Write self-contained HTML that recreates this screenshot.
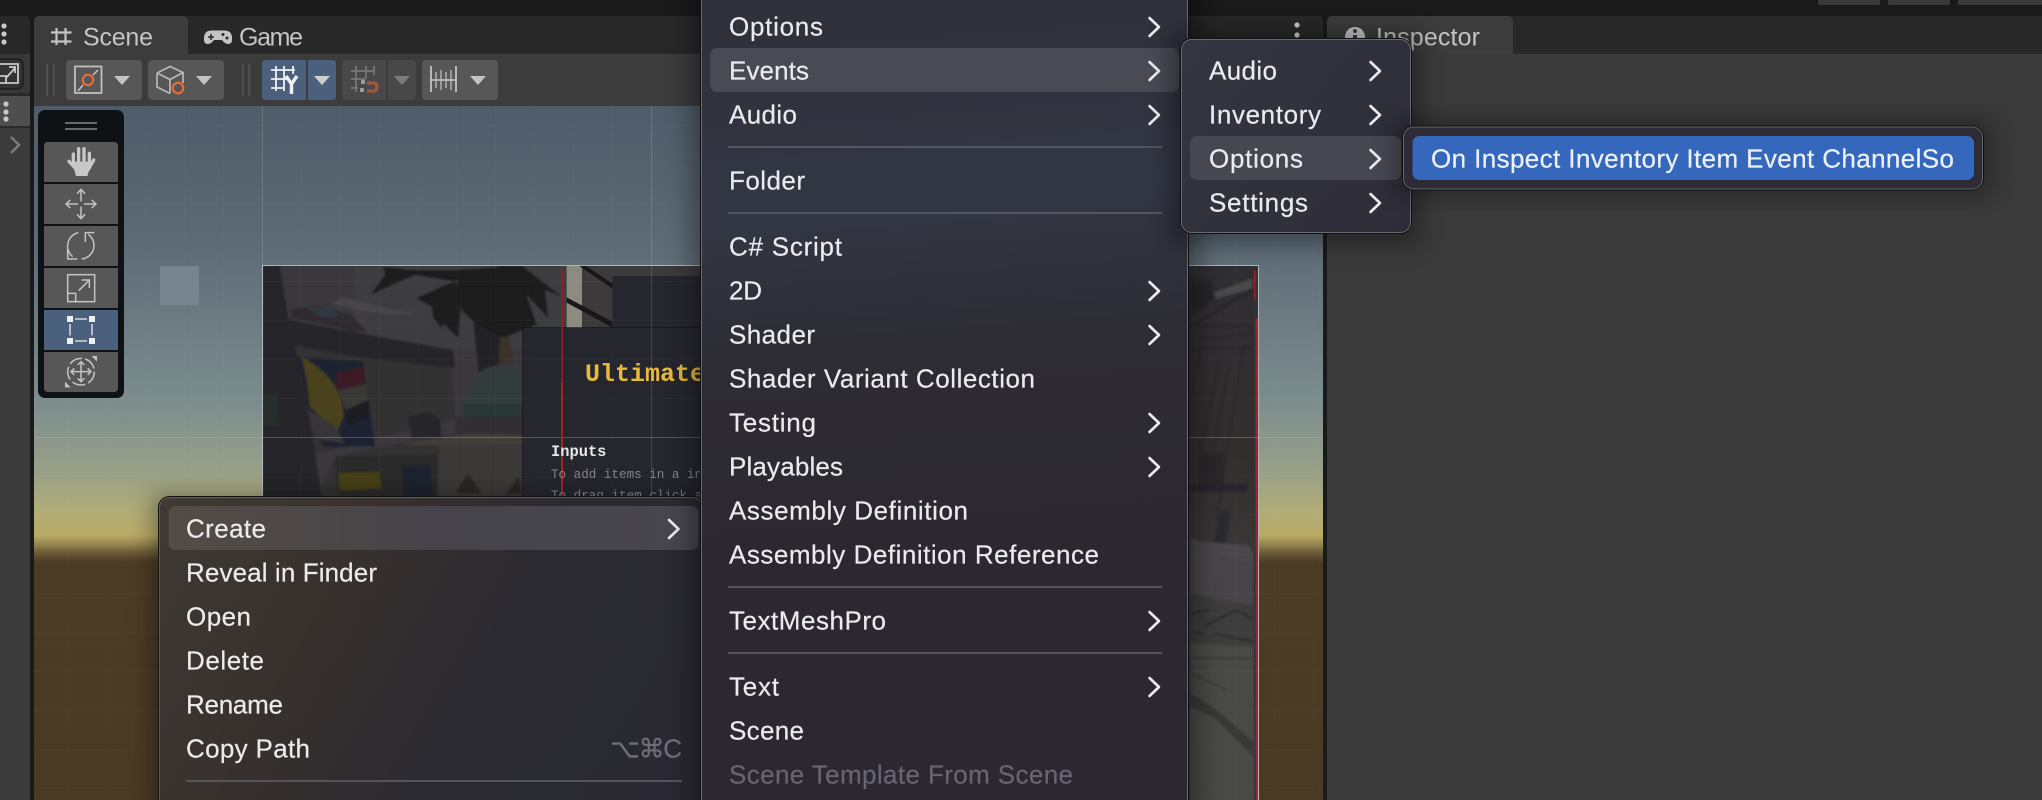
<!DOCTYPE html>
<html><head><meta charset="utf-8"><title>Unity Editor</title>
<style>
html,body{margin:0;padding:0;background:#3a3a3a;width:2042px;height:800px;overflow:hidden}
svg{display:block}
.m{font-family:"Liberation Sans","DejaVu Sans",sans-serif;font-size:26px;fill:#ebebed;stroke:#ebebed;stroke-width:.2px;transform:translateY(-.5px)}
.t{font-family:"Liberation Sans",sans-serif;font-size:25px;fill:#c4c4c4}
.c{fill:none;stroke:#ececee;stroke-width:2.6;stroke-linecap:round;stroke-linejoin:round}
.i{fill:none;stroke:#c4c4c4;stroke-width:4.5}
.mono{font-family:"Liberation Mono",monospace}
</style></head><body>
<svg width="2042" height="800" viewBox="0 0 2042 800" xmlns="http://www.w3.org/2000/svg">
<defs>
<linearGradient id="sky" gradientUnits="userSpaceOnUse" x1="0" y1="106" x2="0" y2="800">
<stop offset="0" stop-color="#4f5c69"/><stop offset=".193" stop-color="#5c6a75"/><stop offset=".424" stop-color="#7b8c8e"/><stop offset=".525" stop-color="#98a088"/><stop offset=".589" stop-color="#b3ad75"/><stop offset=".618" stop-color="#bcab66"/><stop offset=".632" stop-color="#948550"/><stop offset=".644" stop-color="#6a5a35"/><stop offset=".657" stop-color="#4c3c25"/><stop offset="1" stop-color="#4a3a24"/>
</linearGradient>
<pattern id="grid" patternUnits="userSpaceOnUse" x="262" y="125" width="38.92" height="39">
<path d="M0 0V39M0 0H39" stroke="#fff" stroke-opacity=".04" fill="none" stroke-width="1"/>
</pattern>
<linearGradient id="m1" gradientUnits="userSpaceOnUse" x1="158" y1="496" x2="700" y2="800">
<stop offset="0" stop-color="#3f3a34"/><stop offset=".3" stop-color="#38312d"/><stop offset=".6" stop-color="#2b2a31"/><stop offset="1" stop-color="#2a2933"/>
</linearGradient>
<linearGradient id="m2" gradientUnits="userSpaceOnUse" x1="900" y1="0" x2="960" y2="800">
<stop offset="0" stop-color="#2f303a"/><stop offset=".25" stop-color="#333744"/><stop offset=".45" stop-color="#2d2b33"/><stop offset=".7" stop-color="#2c2832"/><stop offset="1" stop-color="#2b2832"/>
</linearGradient>
<linearGradient id="m3" gradientUnits="userSpaceOnUse" x1="1180" y1="38" x2="1411" y2="234">
<stop offset="0" stop-color="#333640"/><stop offset="1" stop-color="#2e2c38"/>
</linearGradient>
<linearGradient id="h1" gradientUnits="userSpaceOnUse" x1="168" y1="0" x2="698" y2="0">
<stop offset="0" stop-color="#534c45"/><stop offset=".5" stop-color="#46434a"/><stop offset="1" stop-color="#47454f"/>
</linearGradient>
<linearGradient id="rs" gradientUnits="userSpaceOnUse" x1="0" y1="266" x2="0" y2="800">
<stop offset="0" stop-color="#2f2e32"/><stop offset=".35" stop-color="#322e2e"/><stop offset=".6" stop-color="#3c3a3a"/><stop offset="1" stop-color="#4a4845"/>
</linearGradient>
<filter id="sh" x="-20%" y="-20%" width="140%" height="140%"><feGaussianBlur stdDeviation="12"/></filter>
<filter id="soft" x="-5%" y="-5%" width="110%" height="110%"><feGaussianBlur stdDeviation="3.5"/></filter>
<clipPath id="cv"><rect x="263" y="266" width="995" height="534"/></clipPath>
</defs>

<!-- base -->
<rect width="2042" height="800" fill="#1a1a1a"/>
<rect x="1818" y="0" width="62" height="5" rx="1" fill="#3a3a3a"/>
<rect x="1888" y="0" width="62" height="5" rx="1" fill="#3a3a3a"/>
<rect x="1958" y="0" width="84" height="5" rx="1" fill="#3a3a3a"/>

<!-- left panel -->
<path d="M0 16H24Q30 16 30 22V800H0Z" fill="#282828"/>
<rect x="0" y="54" width="30" height="746" fill="#3b3b3b"/>
<rect x="0" y="54" width="30" height="42" fill="#383838"/>
<rect x="0" y="93" width="30" height="3" fill="#292929"/>
<rect x="0" y="96" width="30" height="30" fill="#4e4e4e"/>
<rect x="0" y="126" width="30" height="2" fill="#2a2a2a"/>
<g fill="#c8c8c8"><circle cx="4" cy="26" r="2.6"/><circle cx="4" cy="34" r="2.6"/><circle cx="4" cy="42" r="2.6"/>
<circle cx="6" cy="104" r="2.6"/><circle cx="6" cy="112" r="2.6"/><circle cx="6" cy="119" r="2.6"/></g>
<rect x="-10" y="59" width="33" height="30" rx="6" fill="#333" stroke="#232323" stroke-width="2"/>
<g fill="none" stroke="#c8c8c8" stroke-width="1.8"><path d="M0 64H18V83H0"/><path d="M0 76H6V84"/><path d="M6 78L15 68M9 67H15V73"/></g>
<path d="M11 137L19 145L11 153" fill="none" stroke="#7a7a7a" stroke-width="2.6"/>

<!-- scene window chrome -->
<path d="M34 22Q34 16 40 16H1318Q1323 16 1323 22V54H34Z" fill="#282828"/>
<path d="M34 54V22Q34 16 40 16H182Q188 16 188 22V54Z" fill="#3c3c3c"/>
<rect x="34" y="54" width="1289" height="52" fill="#3c3c3c"/>
<rect x="46.5" y="64" width="1.6" height="32" fill="#555"/><rect x="53" y="64" width="1.6" height="32" fill="#555"/>
<rect x="242" y="64" width="1.6" height="32" fill="#555"/><rect x="248.5" y="64" width="1.6" height="32" fill="#555"/>

<!-- tabs -->
<path d="M56.5 28V45M65.5 28V45M51 32.5H71.5M51 41.5H71.5" fill="none" stroke="#c4c4c4" stroke-width="2.2"/>
<text class="t" x="83" y="45.5" textLength="70" lengthAdjust="spacing">Scene</text>
<path d="M211 30.5H225Q232 31 232 38V40Q232 44 228 44Q225 44 222 40H214Q211 44 208 44Q204 44 204 40V38Q204 31 211 30.5Z" fill="#c4c4c4"/>
<path d="M208 37H214M211 34V40" stroke="#282828" stroke-width="1.6"/><circle cx="223" cy="34.5" r="1.5" fill="#282828"/><circle cx="227" cy="38" r="1.5" fill="#282828"/>
<text class="t" x="239" y="45.5" textLength="64" lengthAdjust="spacing">Game</text>

<!-- toolbar buttons -->
<rect x="66" y="60" width="76" height="40" rx="4" fill="#575757"/>
<rect x="75" y="66.5" width="26.5" height="26.5" fill="none" stroke="#c4c4c4" stroke-width="1.7"/>
<path d="M78 91L83 85M93 75L98 70" stroke="#c4c4c4" stroke-width="1.5"/>
<circle cx="88" cy="80" r="5.2" fill="none" stroke="#f26a35" stroke-width="2"/>
<path d="M114 76H130L122 85Z" fill="#c4c4c4"/>
<rect x="148" y="60" width="76" height="40" rx="4" fill="#575757"/>
<path d="M157 73L170 66.5L183 72.5V83M157 73V87L170 93.5M157 73L170 79.5L183 72.5M170 79.5V93.5" fill="none" stroke="#b8b8b8" stroke-width="1.7"/>
<circle cx="178" cy="88" r="5.3" fill="#575757" stroke="#f26a35" stroke-width="2"/>
<path d="M196 76H212L204 85Z" fill="#c4c4c4"/>

<path d="M266 60H306V100H266Q262 100 262 96V64Q262 60 266 60Z" fill="#4a607d"/>
<path d="M308 60H332Q336 60 336 64V96Q336 100 332 100H308Z" fill="#4a607d"/>
<path d="M271 70H295M271 79H287M271 88H284M276 66V91M284 66V91M293 66V74" stroke="#f0f0f0" stroke-width="1.8" fill="none"/>
<path d="M286 76L291.5 84L297 76M291.5 84V94" stroke="#f0f0f0" stroke-width="3.4" fill="none"/>
<path d="M314 76H330L322 85Z" fill="#d0d0d0"/>

<path d="M346 60H386V100H346Q342 100 342 96V64Q342 60 346 60Z" fill="#484848"/>
<path d="M388 60H412Q416 60 416 64V96Q416 100 412 100H388Z" fill="#484848"/>
<path d="M351 71H375M351 79H366M351 88H358M356 66V92M366 66V78M374 66V75" stroke="#777" stroke-width="1.7" fill="none"/>
<rect x="360" y="88" width="4" height="4" fill="#9a9a9a"/><rect x="361" y="80" width="4" height="4" fill="#9a9a9a"/>
<path d="M367 83H373Q377 83 377 87Q377 91 373 91H367" fill="none" stroke="#a0563a" stroke-width="3.4"/>
<path d="M394 76H410L402 85Z" fill="#7c7c7c"/>

<rect x="422" y="60" width="76" height="40" rx="4" fill="#575757"/>
<path d="M431 66V92M456 66V92M431 80H456" stroke="#cfcfcf" stroke-width="1.6" fill="none"/>
<path d="M436 72V88M441 70V90M446 72V88M451 70V90" stroke="#bdbdbd" stroke-width="1.3" fill="none"/>
<path d="M470 76H486L478 85Z" fill="#c4c4c4"/>

<!-- viewport sky -->
<rect x="34" y="106" width="1289" height="694" fill="url(#sky)"/>
<rect x="34" y="106" width="1289" height="694" fill="url(#grid)"/>
<path d="M262.5 106V266M651.5 106V266" stroke="#fff" stroke-opacity=".12"/>
<path d="M34 437.5H262M1258 437.5H1323" stroke="#fff" stroke-opacity=".08"/>
<rect x="160" y="266" width="39" height="39" fill="#76858f"/>

<!-- canvas content -->
<g clip-path="url(#cv)">
<rect x="263" y="266" width="995" height="534" fill="#363539"/>
<g transform="translate(255,260) scale(.33333)">
<g filter="url(#soft)">
<rect x="0" y="0" width="940" height="730" fill="#3a393c"/>
<rect x="300" y="0" width="640" height="266" fill="#3e3d40"/>
<!-- palm -->
<polygon points="655,190 745,195 725,345 672,350" fill="#232327"/>
<g fill="#1b1b1f">
<polygon points="345,105 390,45 385,20 470,30 620,30 600,65 480,45"/>
<polygon points="482,115 560,80 600,65 620,100 610,235 565,190 560,205 535,175 530,140"/>
<polygon points="600,30 760,20 800,60 845,195 790,215 745,235 660,190 620,150"/>
<polygon points="760,30 870,90 880,175 820,110"/>
<polygon points="720,16 800,16 920,110 870,90"/>
</g>
<!-- cloth, ring -->
<polygon points="230,130 265,110 400,145 490,160 400,165 300,150" fill="#464447"/>
<polygon points="105,150 180,135 290,165 335,215 300,215 200,190 110,175" fill="#2f2a2e"/>
<polygon points="150,140 240,145 250,170 200,175" fill="#303840"/>
<!-- building -->
<polygon points="120,255 590,320 605,520 430,550 240,590 190,710 800,710 803,520 620,470 120,600" fill="#333032"/>
<polygon points="100,180 595,270 600,325 300,290 118,255" fill="#282629"/>
<polygon points="100,175 120,255 300,290 300,240" fill="#282629"/>
<polygon points="125,290 325,305 360,560 205,560 160,440" fill="#1d2330"/>
<path d="M140 290Q265 360 265 470L245 520L165 440L155 360Z" fill="#4a421c"/>
<polygon points="240,340 328,320 332,370 250,392" fill="#3a1f25"/>
<polygon points="250,392 334,372 340,420 272,450" fill="#3b3738"/>
<polygon points="272,450 340,420 345,470 280,500" fill="#1c1c20"/>
<polygon points="160,450 240,500 270,550 200,540 165,500" fill="#393639"/>
<!-- left pillar -->
<polygon points="22,16 75,16 100,175 120,260 165,480 200,710 0,710 0,16" fill="#25252a"/>
<polygon points="25,400 65,400 72,500 25,495" fill="#272f2c"/>
<!-- dome -->
<polygon points="735,230 760,230 778,310 730,315" fill="#3a3029"/>
<path d="M625 470Q625 340 715 318Q780 315 803 340V470Z" fill="#303d3a"/>
<path d="M625 430H803V470H625Z" fill="#2c3835"/>
<rect x="600" y="470" width="203" height="55" fill="#302d32"/>
<polygon points="460,470 520,455 555,480 560,530 470,535" fill="#282629"/>
<polygon points="430,555 640,520 803,525 803,555 560,556" fill="#433e38"/>
<!-- lower -->
<polygon points="240,590 550,585 550,710 250,710" fill="#2c292b"/>
<polygon points="550,556 803,556 803,710 550,710" fill="#3b3939"/>
<polygon points="440,618 525,615 535,710 445,710" fill="#1d212e"/>
<polygon points="250,640 372,635 378,685 255,692" fill="#474116"/>
<polygon points="600,700 640,640 680,700" fill="#2a2626"/>
<polygon points="750,705 790,650 803,700" fill="#292525"/>
</g>
<!-- beam region -->
<rect x="935" y="16" width="46" height="190" fill="#8d8a80"/>
<polygon points="981,16 1332,16 1332,203 981,203" fill="#3d3a3c"/>
<polygon points="970,16 990,16 1072,70 1072,85" fill="#17171a"/>
<polygon points="935,112 1072,185 1072,203 935,128" fill="#17171a"/>
<rect x="1072" y="48" width="3000" height="155" fill="#26262e"/>
<!-- panel -->
<rect x="803" y="203" width="3000" height="520" fill="#26262f" stroke="#111" stroke-width="2"/>
</g>

<!-- right strip -->
<rect x="1190" y="266" width="68" height="534" fill="url(#rs)"/>
<g transform="translate(1180,230) scale(.33333)" filter="url(#soft)">
<polygon points="33,150 95,150 105,205 33,262" fill="#282629"/>
<polygon points="100,188 218,145 218,175 108,207" fill="#4a484a"/>
<path d="M33 290L218 178" stroke="#232225" stroke-width="5" fill="none"/>
<path d="M33 288H218M60 328L218 312M33 355H218" stroke="#29272a" stroke-width="6" fill="none"/>
<path d="M60 360L33 510M120 390L60 660M190 350L110 870M150 400L100 660" stroke="#2a282b" stroke-width="6" fill="none"/>
<polygon points="55,670 130,668 130,760 55,770" fill="#2a282c"/>
<polygon points="33,765 205,760 200,785 33,785" fill="#272529"/>
</g>
<g transform="translate(1180,510) scale(.33333)" filter="url(#soft)">
<polygon points="120,0 155,0 105,250 78,240" fill="#2c2a2d"/>
<polygon points="33,85 60,95 205,105 220,130 220,295 33,250" fill="#4a4748"/>
<polygon points="120,135 220,165 220,295 90,270" fill="#47454a"/>
<polygon points="33,255 220,285 220,405 33,390" fill="#3e3c3e"/>
<path d="M33 310L90 300M70 350L170 300L220 330M100 370L220 395M33 365L70 370" stroke="#2c2b2e" stroke-width="6" fill="none"/>
<polygon points="33,400 220,410 220,880 33,880" fill="#4a4846"/>
<path d="M33 445H220" stroke="#363536" stroke-width="4"/>
<path d="M33 490L140 540" stroke="#3a393a" stroke-width="5"/>
<polygon points="33,550 110,600 220,695 220,738 105,625 33,590" fill="#383738"/>
</g>
<rect x="1254" y="270" width="3" height="530" fill="#30303a"/>
<rect x="1255.5" y="318" width="2" height="482" fill="#a32424"/>
<rect x="1254" y="270" width="1.4" height="30" fill="#a32424"/>
<!-- grid overlay -->
<rect x="263" y="266" width="995" height="534" fill="url(#grid)"/>
<path d="M263 437.5H1258" stroke="#fff" stroke-opacity=".2"/>
<path d="M651.5 266V496" stroke="#fff" stroke-opacity=".12"/>
<!-- red line -->
<rect x="561.5" y="270" width="1.5" height="113" fill="#8f2323"/>
<rect x="561" y="383" width="2" height="113" fill="#a32424"/>
<!-- texts -->
<text class="mono" x="585" y="381" font-size="25" font-weight="700" fill="#e8b93a">Ultimate</text>
<text class="mono" x="551" y="456" font-size="15.4" font-weight="700" fill="#e8e8e8">Inputs</text>
<text class="mono" x="551" y="478" font-size="12.6" fill="#85858d">To add items in a inventory</text>
<text class="mono" x="551" y="499" font-size="12.6" fill="#85858d">To drag item click and hold</text>
</g>
<path d="M262.5 800V265.5H1258.5V800" fill="none" stroke="#b0b7bb" stroke-width="1.1"/>

<!-- tools overlay -->
<rect x="38" y="110" width="86" height="288" rx="7" fill="#0e1215"/>
<rect x="65" y="122" width="32" height="2" fill="#6a6a6a"/><rect x="65" y="128" width="32" height="2" fill="#6a6a6a"/>
<path d="M48 142H114Q118 142 118 146V182H44V146Q44 142 48 142Z" fill="#575757"/>
<rect x="44" y="184" width="74" height="40" fill="#575757"/>
<rect x="44" y="226" width="74" height="40" fill="#575757"/>
<rect x="44" y="268" width="74" height="40" fill="#575757"/>
<rect x="44" y="310" width="74" height="40" fill="#4a607d"/>
<path d="M44 352H118V388Q118 392 114 392H48Q44 392 44 388Z" fill="#575757"/>
<g transform="translate(30,100) scale(.33333)">
<!-- hand -->
<g fill="none" stroke="#c8c8c8" stroke-width="10" stroke-linecap="round"><path d="M130 195V162M146 190V146M162 190V146M178 195V160M117 184L138 207M191 180L176 207"/></g>
<path d="M126 185H186L172 228H138Z" fill="#c8c8c8"/>
<!-- move -->
<g class="i"><path d="M153 268V304M153 320V356M108 312H144M162 312H198M141 281L153 268L165 281M141 343L153 356L165 343M121 300L108 312L121 324M185 300L198 312L185 324"/></g>
<!-- rotate -->
<g class="i"><path d="M145 398A41 41 0 0 0 128 470M113 446V477H142M165 398H193M166 398V426M175 403A41 41 0 0 1 155 477"/></g>
<!-- scale -->
<g class="i"><rect x="113" y="524" width="81" height="81"/><path d="M113 580H137V605M146 572L178 540M155 540H178V564"/></g>
<!-- rect tool -->
<g fill="#eee"><rect x="111" y="648" width="18" height="18"/><rect x="177" y="648" width="18" height="18"/><rect x="111" y="714" width="18" height="18"/><rect x="177" y="714" width="18" height="18"/></g>
<path d="M135 657H171M135 723H171M120 672V706M186 672V706" stroke="#eee" stroke-width="4" fill="none"/>
<!-- transform -->
<circle cx="153" cy="815" r="40" fill="none" stroke="#c4c4c4" stroke-width="4.5" stroke-dasharray="40 10"/>
<g class="i"><path d="M153 785V845M123 815H183M143 795L153 785L163 795M143 835L153 845L163 835M133 805L123 815L133 825M173 805L183 815L173 825"/></g>
<path d="M185 768H201V785ZM105 862H122L105 845Z" fill="#c4c4c4"/>
</g>

<!-- kebab scene -->
<g fill="#c8c8c8"><circle cx="1297" cy="25" r="2.6"/><circle cx="1297" cy="35" r="2.6"/><circle cx="1297" cy="44" r="2.6"/></g>

<!-- inspector -->
<path d="M1327 22Q1327 16 1333 16H2042V54H1327Z" fill="#282828"/>
<path d="M1327 54V22Q1327 16 1333 16H1507Q1513 16 1513 22V54Z" fill="#3c3c3c"/>
<rect x="1327" y="54" width="715" height="746" fill="#3a3a3a"/>
<circle cx="1355" cy="37" r="10" fill="#c4c4c4"/>
<rect x="1353" y="35" width="4" height="9" fill="#3c3c3c"/><circle cx="1355" cy="31" r="2" fill="#3c3c3c"/>
<text class="t" x="1376" y="45.5" textLength="104" lengthAdjust="spacing">Inspector</text>

<!-- menu 1 -->
<rect x="152" y="495" width="560" height="330" fill="#000" opacity=".35" filter="url(#sh)"/>
<rect x="158.5" y="496.5" width="545" height="340" rx="11" fill="url(#m1)" stroke="#101010"/>
<rect x="159.5" y="497.5" width="543" height="338" rx="10" fill="none" stroke="#6a6762" stroke-opacity=".8"/>
<rect x="168.5" y="506" width="530" height="44" rx="7" fill="url(#h1)"/>
<text class="m" x="186" y="538" textLength="80" lengthAdjust="spacing">Create</text>
<path class="c" d="M669 520L678.5 529L669 538"/>
<text class="m" x="186" y="582" textLength="191" lengthAdjust="spacing">Reveal in Finder</text>
<text class="m" x="186" y="626" textLength="65" lengthAdjust="spacing">Open</text>
<text class="m" x="186" y="670" textLength="78" lengthAdjust="spacing">Delete</text>
<text class="m" x="186" y="714" textLength="97" lengthAdjust="spacing">Rename</text>
<text class="m" x="186" y="758" textLength="124" lengthAdjust="spacing">Copy Path</text>
<text class="m" x="610" y="758" textLength="72" lengthAdjust="spacing" style="fill:#6f6f79;stroke:#6f6f79">⌥⌘C</text>
<rect x="186" y="780" width="496" height="2" fill="#56545b"/>

<!-- menu 2 -->
<rect x="690" y="-20" width="510" height="840" fill="#000" opacity=".35" filter="url(#sh)"/>
<rect x="700.5" y="-12" width="488" height="830" rx="11" fill="url(#m2)" stroke="#101010"/>
<rect x="701.5" y="-11" width="486" height="828" rx="10" fill="none" stroke="#696971"/>
<rect x="710" y="48" width="469" height="44" rx="7" fill="#4a4a55"/>
<g>
<text class="m" x="729" y="36" textLength="94" lengthAdjust="spacing">Options</text>
<text class="m" x="729" y="80" textLength="80" lengthAdjust="spacing">Events</text>
<text class="m" x="729" y="124" textLength="68" lengthAdjust="spacing">Audio</text>
<text class="m" x="729" y="190" textLength="76" lengthAdjust="spacing">Folder</text>
<text class="m" x="729" y="256" textLength="113" lengthAdjust="spacing">C# Script</text>
<text class="m" x="729" y="300" textLength="33" lengthAdjust="spacing">2D</text>
<text class="m" x="729" y="344" textLength="86" lengthAdjust="spacing">Shader</text>
<text class="m" x="729" y="388" textLength="306" lengthAdjust="spacing">Shader Variant Collection</text>
<text class="m" x="729" y="432" textLength="87" lengthAdjust="spacing">Testing</text>
<text class="m" x="729" y="476" textLength="114" lengthAdjust="spacing">Playables</text>
<text class="m" x="729" y="520" textLength="239" lengthAdjust="spacing">Assembly Definition</text>
<text class="m" x="729" y="564" textLength="370" lengthAdjust="spacing">Assembly Definition Reference</text>
<text class="m" x="729" y="630" textLength="157" lengthAdjust="spacing">TextMeshPro</text>
<text class="m" x="729" y="696" textLength="50" lengthAdjust="spacing">Text</text>
<text class="m" x="729" y="740" textLength="75" lengthAdjust="spacing">Scene</text>
<text class="m" x="729" y="784" textLength="344" lengthAdjust="spacing" style="fill:#676570;stroke:#676570">Scene Template From Scene</text>
</g>
<g fill="#54545d"><rect x="728" y="146" width="434" height="2"/><rect x="728" y="212" width="434" height="2"/><rect x="728" y="586" width="434" height="2"/><rect x="728" y="652" width="434" height="2"/></g>
<g class="c">
<path d="M1149.5 18L1159 27L1149.5 36"/><path d="M1149.5 62L1159 71L1149.5 80"/><path d="M1149.5 106L1159 115L1149.5 124"/>
<path d="M1149.5 282L1159 291L1149.5 300"/><path d="M1149.5 326L1159 335L1149.5 344"/><path d="M1149.5 414L1159 423L1149.5 432"/>
<path d="M1149.5 458L1159 467L1149.5 476"/><path d="M1149.5 612L1159 621L1149.5 630"/><path d="M1149.5 678L1159 687L1149.5 696"/>
</g>

<!-- menu 3 -->
<rect x="1170" y="32" width="250" height="212" fill="#000" opacity=".35" filter="url(#sh)"/>
<rect x="1180.5" y="38.5" width="231" height="195" rx="11" fill="url(#m3)" stroke="#101010"/>
<rect x="1181.5" y="39.5" width="229" height="193" rx="10" fill="none" stroke="#6a6a72"/>
<rect x="1190" y="136" width="211" height="44" rx="7" fill="#474752"/>
<text class="m" x="1209" y="80" textLength="68" lengthAdjust="spacing">Audio</text>
<text class="m" x="1209" y="124" textLength="112" lengthAdjust="spacing">Inventory</text>
<text class="m" x="1209" y="168" textLength="94" lengthAdjust="spacing">Options</text>
<text class="m" x="1209" y="212" textLength="99" lengthAdjust="spacing">Settings</text>
<g class="c">
<path d="M1370.5 62L1380 71L1370.5 80"/><path d="M1370.5 106L1380 115L1370.5 124"/><path d="M1370.5 150L1380 159L1370.5 168"/><path d="M1370.5 194L1380 203L1370.5 212"/>
</g>

<!-- menu 4 -->
<rect x="1395" y="120" width="596" height="76" fill="#000" opacity=".3" filter="url(#sh)"/>
<rect x="1402.5" y="126" width="581" height="64" rx="11" fill="#2e2b36" stroke="#0e0e0e"/>
<rect x="1403.5" y="127" width="579" height="62" rx="10" fill="none" stroke="#66656c"/>
<rect x="1412.5" y="136" width="561.5" height="44" rx="7" fill="#3568bd"/>
<text class="m" x="1431" y="168" textLength="523" lengthAdjust="spacing" style="fill:#ecf1fb;stroke:#ecf1fb">On Inspect Inventory Item Event ChannelSo</text>
</svg>
</body></html>
